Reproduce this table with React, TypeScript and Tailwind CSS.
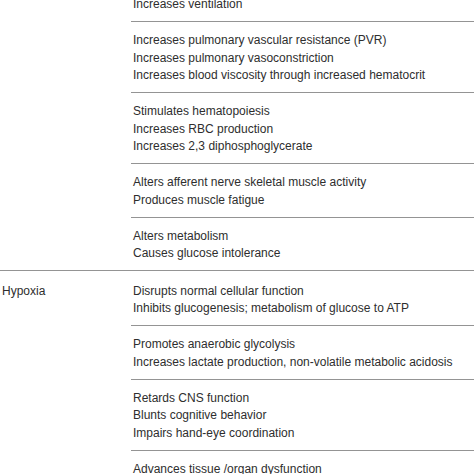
import React from "react";

type Section = { label: string; groups: string[][]; cutTop?: boolean };

const sections: Section[] = [
  {
    label: "",
    cutTop: true,
    groups: [
      ["Increases ventilation"],
      [
        "Increases pulmonary vascular resistance (PVR)",
        "Increases pulmonary vasoconstriction",
        "Increases blood viscosity through increased hematocrit",
      ],
      [
        "Stimulates hematopoiesis",
        "Increases RBC production",
        "Increases 2,3 diphosphoglycerate",
      ],
      ["Alters afferent nerve skeletal muscle activity", "Produces muscle fatigue"],
      ["Alters metabolism", "Causes glucose intolerance"],
    ],
  },
  {
    label: "Hypoxia",
    groups: [
      ["Disrupts normal cellular function", "Inhibits glucogenesis; metabolism of glucose to ATP"],
      ["Promotes anaerobic glycolysis", "Increases lactate production, non-volatile metabolic acidosis"],
      ["Retards CNS function", "Blunts cognitive behavior", "Impairs hand-eye coordination"],
      ["Advances tissue /organ dysfunction"],
    ],
  },
];

export default function App() {
  return (
    <div
      className="w-[474px] h-[474px] overflow-hidden bg-white text-[#2e2e2e] text-[12px] leading-[17.5px]"
      style={{ fontFamily: '"Liberation Sans", Arial, sans-serif' }}
    >
      <div className="-mt-[4px] flex flex-col">
        {sections.map((s, si) => (
          <div
            key={si}
            className={si > 0 ? "flex border-t border-[#949494]" : "flex"}
          >
            <div
              className={
                si > 0
                  ? "w-[133px] shrink-0 pl-[2px] pt-[11.5px]"
                  : "w-[133px] shrink-0 pl-[2px] pt-[10px]"
              }
            >
              {s.label}
            </div>
            <div className="flex-1 flex flex-col">
              {s.groups.map((g, gi) => (
                <div
                  key={gi}
                  className={
                    gi === 0
                      ? s.cutTop
                        ? "pb-[7.5px]"
                        : "pt-[11.5px] pb-[7.5px]"
                      : "border-t border-[#949494] -ml-[2px] pl-[2px] pt-[10px] pb-[7.5px]"
                  }
                >
                  {g.map((line, li) => (
                    <div key={li} className="whitespace-nowrap">
                      {line}
                    </div>
                  ))}
                </div>
              ))}
            </div>
          </div>
        ))}
      </div>
    </div>
  );
}
